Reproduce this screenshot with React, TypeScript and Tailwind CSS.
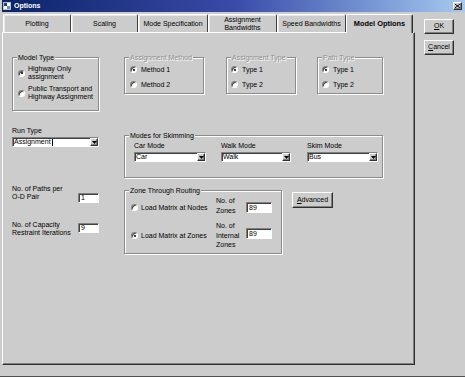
import React from 'react';

const sunken =
  'border border-t-[#808080] border-l-[#808080] border-b-white border-r-white bg-white shadow-[inset_1px_1px_0_#404040]';
const raised =
  'border border-t-white border-l-white border-b-[#303030] border-r-[#303030] bg-[#cccccc] shadow-[inset_-1px_-1px_0_#808080]';

function Radio({ checked }: { checked?: boolean }) {
  return (
    <span
      className={`flex h-[7px] w-[7px] shrink-0 items-center justify-center rounded-full ${sunken}`}
    >
      {checked && <span className="h-[2px] w-[2px] rounded-full bg-black" />}
    </span>
  );
}

function Group({
  title,
  disabled,
  className,
  children,
}: {
  title: string;
  disabled?: boolean;
  className?: string;
  children?: React.ReactNode;
}) {
  return (
    <div
      className={`relative shrink-0 border border-[#8c8c8c] shadow-[1px_1px_0_#fff,inset_1px_1px_0_#fff] ${className}`}
    >
      <span
        className={`absolute -top-[5px] left-[4px] whitespace-nowrap bg-[#cccccc] px-[1px] leading-[9px] ${
          disabled ? 'text-[#8e8e8e] [text-shadow:1px_1px_0_#fff]' : 'text-black'
        }`}
      >
        {title}
      </span>
      {children}
    </div>
  );
}

function Arrow() {
  return (
    <span className={`flex h-[8px] w-[8px] shrink-0 items-center justify-center ${raised}`}>
      <svg width="5" height="3" viewBox="0 0 5 3">
        <path d="M0 0h5L2.5 3z" fill="#000" />
      </svg>
    </span>
  );
}

function Combo({ value, caret, className }: { value: string; caret?: boolean; className?: string }) {
  return (
    <div className={`flex h-[10px] items-center ${sunken} ${className}`}>
      <span className="flex flex-1 items-center pl-[1px] leading-[8px]">
        {value}
        {caret && <span className="ml-[1px] h-[7px] w-px bg-black" />}
      </span>
      <Arrow />
    </div>
  );
}

function Field({ value, className }: { value: string; className?: string }) {
  return (
    <div className={`flex items-center pl-[2px] leading-[8px] ${sunken} ${className}`}>{value}</div>
  );
}

function Btn({ children, className }: { children: React.ReactNode; className?: string }) {
  return (
    <div className={`flex shrink-0 items-center justify-center ${raised} ${className}`}>{children}</div>
  );
}

function Option({ label, checked }: { label: string; checked?: boolean }) {
  return (
    <div className="flex h-[9px] items-center gap-[4px] leading-[9px]">
      <Radio checked={checked} />
      <span className="whitespace-nowrap">{label}</span>
    </div>
  );
}

const tabs = [
  { label: 'Plotting', w: 'w-[68px]' },
  { label: 'Scaling', w: 'w-[67px]' },
  { label: 'Mode Specification', w: 'w-[70px]' },
  { label: 'Assignment\nBandwidths', w: 'w-[69px]' },
  { label: 'Speed Bandwidths', w: 'w-[69px]' },
];

export default function App() {
  return (
    <div className="flex h-[377px] w-[465px] flex-col overflow-hidden border-b border-[#505050] bg-[#cccccc] pl-[2px] font-['Liberation_Sans',Arial,sans-serif] text-[7px] text-black">
      {/* title bar */}
      <div className="flex h-[12px] shrink-0 items-center justify-between bg-gradient-to-r from-[#0a246a] via-[#3a4aa8] to-[#a6caf0] pl-[1px] pr-[3px]">
        <div className="flex items-center gap-[3px]">
          <svg width="8" height="8" viewBox="0 0 8 8">
            <rect x="0.5" y="0.5" width="7" height="7" fill="#fff" stroke="#c0c0c0" />
            <rect x="1" y="1" width="3" height="3" fill="#1a3a8a" />
            <rect x="4" y="4" width="3" height="3" fill="#7090c0" />
          </svg>
          <span className="font-bold leading-[10px] text-white">Options</span>
        </div>
        <Btn className="h-[8px] w-[9px]">
          <svg width="5" height="4" viewBox="0 0 5 4">
            <path d="M0 0L5 4M5 0L0 4" stroke="#000" strokeWidth="1" />
          </svg>
        </Btn>
      </div>

      <div className="mt-[2px] flex">
        {/* tab control */}
        <div className="flex w-[413px] flex-col">
          <div className="flex h-[18px] items-end pl-[1px]">
            {tabs.map((t) => (
              <div
                key={t.label}
                className={`flex h-[18px] ${t.w} items-center justify-center whitespace-pre-line rounded-t-[2px] border-l border-t border-r border-l-white border-t-white border-r-[#404040] text-center leading-[8px] shadow-[inset_1px_1px_0_#e8e8e8]`}
              >
                {t.label}
              </div>
            ))}
            <div className="relative z-10 -mb-px flex h-[19px] w-[67px] items-center justify-center rounded-t-[2px] border-l border-t border-r border-l-white border-t-white border-r-[#303030] bg-[#cccccc] pb-px text-[7.4px] font-bold shadow-[inset_-1px_0_0_#808080]">
              Model Options
            </div>
          </div>

          <div className="flex h-[333px] flex-col border border-l-white border-t-white border-b-[#303030] border-r-[#303030] pl-[9px] pt-[24px] shadow-[inset_-1px_-1px_0_#808080]">
            {/* row 1 */}
            <div className="flex items-start">
              <Group title="Model Type" className="h-[54px] w-[87px]">
                <div className="mt-[7px] flex items-center gap-[3px] pl-[5px]">
                  <Radio checked />
                  <span className="whitespace-nowrap leading-[8px]">
                    Highway Only
                    <br />
                    assignment
                  </span>
                </div>
                <div className="mt-[4px] flex items-center gap-[3px] pl-[5px]">
                  <Radio />
                  <span className="whitespace-nowrap leading-[8px]">
                    Public Transport and
                    <br />
                    Highway Assignment
                  </span>
                </div>
              </Group>
              <Group title="Assignment Method" disabled className="ml-[25px] h-[37px] w-[80px]">
                <div className="mt-[7px] flex flex-col gap-[6px] pl-[5px]">
                  <Option label="Method 1" checked />
                  <Option label="Method 2" />
                </div>
              </Group>
              <Group title="Assignment Type" disabled className="ml-[22px] h-[37px] w-[70px]">
                <div className="mt-[7px] flex flex-col gap-[6px] pl-[4px]">
                  <Option label="Type 1" checked />
                  <Option label="Type 2" />
                </div>
              </Group>
              <Group title="Path Type" disabled className="ml-[21px] h-[37px] w-[66px]">
                <div className="mt-[7px] flex flex-col gap-[6px] pl-[4px]">
                  <Option label="Type 1" checked />
                  <Option label="Type 2" />
                </div>
              </Group>
            </div>

            {/* row 2 */}
            <div className="mt-[15px] flex items-start">
              <div className="flex w-[87px] shrink-0 flex-col">
                <span className="leading-[9px]">Run Type</span>
                <Combo value="Assignment" caret className="mt-[2px]" />
              </div>
              <Group title="Modes for Skimming" className="ml-[25px] mt-[9px] h-[43px] w-[259px]">
                <div className="flex pl-[9px] pt-[5px]">
                  <div className="flex w-[72px] flex-col">
                    <span className="leading-[9px]">Car Mode</span>
                    <Combo value="Car" className="mt-[2px]" />
                  </div>
                  <div className="ml-[15px] flex w-[70px] flex-col">
                    <span className="leading-[9px]">Walk Mode</span>
                    <Combo value="Walk" className="mt-[2px]" />
                  </div>
                  <div className="ml-[16px] flex w-[71px] flex-col">
                    <span className="leading-[9px]">Skim Mode</span>
                    <Combo value="Bus" className="mt-[2px]" />
                  </div>
                </div>
              </Group>
            </div>

            {/* row 3 */}
            <div className="mt-[7px] flex items-start">
              <div className="flex w-[87px] shrink-0 flex-col">
                <div className="flex items-start justify-between">
                  <span className="whitespace-nowrap leading-[8px]">
                    No. of Paths per
                    <br />
                    O-D Pair
                  </span>
                  <Field value="1" className="mt-[8px] h-[10px] w-[21px]" />
                </div>
                <div className="mt-[18px] flex items-start justify-between">
                  <span className="whitespace-nowrap leading-[8px]">
                    No. of Capacity
                    <br />
                    Restraint Iterations
                  </span>
                  <Field value="9" className="mt-[2px] h-[10px] w-[21px]" />
                </div>
              </div>
              <Group title="Zone Through Routing" className="ml-[25px] mt-[5px] h-[64px] w-[158px]">
                <div className="flex flex-col pl-[6px] pt-[5px]">
                  <div className="flex items-start">
                    <div className="mt-[7px] flex w-[85px] items-center gap-[3px]">
                      <Radio />
                      <span className="whitespace-nowrap leading-[9px]">Load Matrix at Nodes</span>
                    </div>
                    <span className="w-[30px] leading-[9.5px]">
                      No. of
                      <br />
                      Zones
                    </span>
                    <Field value="89" className="mt-[6px] h-[11px] w-[26px]" />
                  </div>
                  <div className="mt-[6px] flex items-start">
                    <div className="mt-[10px] flex w-[85px] items-center gap-[3px]">
                      <Radio checked />
                      <span className="whitespace-nowrap leading-[9px]">Load Matrix at Zones</span>
                    </div>
                    <span className="w-[30px] leading-[9.5px]">
                      No. of
                      <br />
                      Internal
                      <br />
                      Zones
                    </span>
                    <Field value="89" className="mt-[7px] h-[11px] w-[26px]" />
                  </div>
                </div>
              </Group>
              <Btn className="ml-[10px] mt-[7px] h-[16px] w-[41px]">
                <span>
                  <span className="underline">A</span>dvanced
                </span>
              </Btn>
            </div>
          </div>
        </div>

        {/* dialog buttons */}
        <div className="ml-[9px] mt-[5px] flex flex-col gap-[6px]">
          <Btn className="h-[15px] w-[30px]">
            <span>
              <span className="underline">O</span>K
            </span>
          </Btn>
          <Btn className="h-[15px] w-[30px]">
            <span>
              <span className="underline">C</span>ancel
            </span>
          </Btn>
        </div>
      </div>
    </div>
  );
}
